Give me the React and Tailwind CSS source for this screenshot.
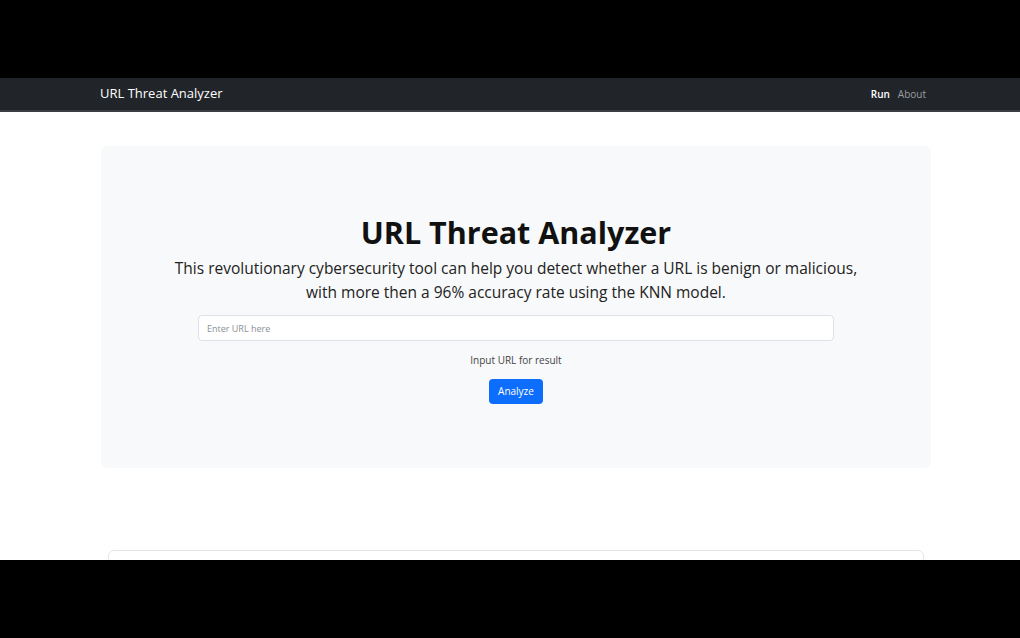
export default function App() {
  return (
    <div className="h-[638px] w-full bg-black flex flex-col overflow-hidden" style={{ fontFamily: '"Open Sans", "Noto Sans", sans-serif' }}>
      <div className="h-[78px] shrink-0 bg-black" />
      <div className="h-[482px] shrink-0 bg-white overflow-hidden flex flex-col">
        {/* Navbar */}
        <nav className="h-[34px] shrink-0 bg-[#212529] border-b-2 border-[#3a3d41] flex items-center justify-between pl-[100px] pr-[94px]">
          <span className="text-[13px] text-white">URL Threat Analyzer</span>
          <div className="flex items-center gap-[8px] text-[10px]">
            <span className="text-white font-semibold">Run</span>
            <span className="text-[#9a9da0]">About</span>
          </div>
        </nav>

        {/* Jumbotron */}
        <div className="shrink-0 mt-[34px] mx-[101px] w-[830px] h-[322px] bg-[#f8f9fa] rounded-md flex flex-col items-center pt-[66px]">
          <h1 className="text-[30.5px] leading-[40px] font-bold text-[#111]">URL Threat Analyzer</h1>
          <p className="mt-[4px] text-[15.5px] leading-[24px] text-[#222] text-center">
            This revolutionary cybersecurity tool can help you detect whether a URL is benign or malicious,
            <br />
            with more then a 96% accuracy rate using the KNN model.
          </p>
          <input
            className="mt-[11px] w-[636px] h-[26px] bg-white border border-[#dee2e6] rounded-[4px] px-[8px] text-[9px] text-[#555] placeholder:text-[#8a8f94] outline-none"
            placeholder="Enter URL here"
          />
          <p className="mt-[12px] text-[10px] text-[#444]">Input URL for result</p>
          <button className="mt-[11px] h-[25px] px-[9px] bg-[#0d6efd] text-white text-[10px] rounded-[4px]">Analyze</button>
        </div>

        {/* Results card */}
        <div className="shrink-0 mt-[82px] mx-[108px] w-[816px] h-[40px] border border-[#e3e6e9] rounded-md" />
      </div>
      <div className="flex-1 bg-black" />
    </div>
  );
}
